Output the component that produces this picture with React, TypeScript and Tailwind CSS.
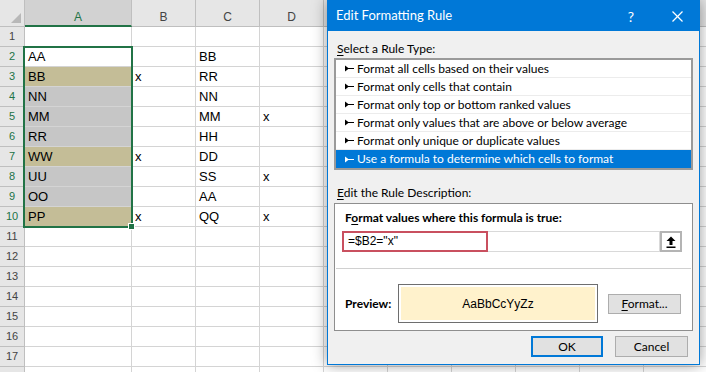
import React from 'react';

const colWidths = [107, 64, 64, 64, 64, 64, 64, 64, 64, 64];
const colNames = ['A', 'B', 'C', 'D', 'E', 'F', 'G', 'H', 'I', 'J'];

const colA: Record<number, string> = { 2: 'AA', 3: 'BB', 4: 'NN', 5: 'MM', 6: 'RR', 7: 'WW', 8: 'UU', 9: 'OO', 10: 'PP' };
const colB: Record<number, string> = { 3: 'x', 7: 'x', 10: 'x' };
const colC: Record<number, string> = { 2: 'BB', 3: 'RR', 4: 'NN', 5: 'MM', 6: 'HH', 7: 'DD', 8: 'SS', 9: 'AA', 10: 'QQ' };
const colD: Record<number, string> = { 5: 'x', 8: 'x', 10: 'x' };
const tanRows = [3, 7, 10];

// row 18 only peeks in at the bottom edge, its number stays hidden
const rows = Array.from({ length: 18 }, (_, i) => i + 1);

const ruleTypes = [
  'Format all cells based on their values',
  'Format only cells that contain',
  'Format only top or bottom ranked values',
  'Format only values that are above or below average',
  'Format only unique or duplicate values',
  'Use a formula to determine which cells to format',
];

function Bullet({ light }: { light?: boolean }) {
  const c = light ? '#ffffff' : '#000000';
  return (
    <svg width="9" height="7" viewBox="0 0 9 7" className="shrink-0">
      <polygon points="0,0.5 4,3.5 0,6.5" fill={c} />
      <line x1="3" y1="3.5" x2="9" y2="3.5" stroke={c} strokeWidth="1" />
    </svg>
  );
}

function cellBg(col: number, row: number) {
  if (col !== 0 || row < 3 || row > 10) return 'bg-white';
  return tanRows.includes(row) ? 'bg-[#c4bd97]' : 'bg-[#c6c6c6]';
}

function cellText(col: number, row: number) {
  if (col === 0) return colA[row];
  if (col === 1) return colB[row];
  if (col === 2) return colC[row];
  if (col === 3) return colD[row];
  return undefined;
}

function Sheet() {
  return (
    <div className="flex flex-col font-['Liberation_Sans',Arial,sans-serif] text-[13px] text-black">
      <div className="flex h-[27px]">
        <div className="relative w-[25px] h-[27px] shrink-0 bg-[#e6e6e6] border-r border-b border-[#bfbfbf]">
          <svg width="10" height="10" viewBox="0 0 10 10" className="absolute right-[3px] bottom-[3px]">
            <polygon points="10,0 10,10 0,10" fill="#b8b8b8" />
          </svg>
        </div>
        {colWidths.map((w, i) => (
          <div
            key={i}
            style={{ width: w }}
            className={
              i === 0
                ? 'shrink-0 h-[27px] bg-[#d2d2d2] border-r border-[#bfbfbf] border-b-2 border-b-[#217346] text-center text-[12px] leading-[18px] pt-[8px] text-[#217346]'
                : 'shrink-0 h-[27px] bg-[#e6e6e6] border-r border-b border-[#bfbfbf] text-center text-[12px] leading-[18px] pt-[8px] text-[#444444]'
            }
          >
            {colNames[i]}
          </div>
        ))}
      </div>
      {rows.map((r) => (
        <div key={r} className="flex h-[20px]">
          <div
            className={
              'w-[25px] h-[20px] shrink-0 bg-[#e6e6e6] border-r border-b border-[#bfbfbf] text-center text-[11px] leading-[19px] ' +
              (r >= 2 && r <= 10 ? 'text-[#217346]' : 'text-[#444444]')
            }
          >
            {r < 18 ? r : null}
          </div>
          {colWidths.map((w, c) => (
            <div
              key={c}
              style={{ width: w }}
              className={'shrink-0 h-[20px] border-r border-b border-[#d4d4d4] pl-[3px] leading-[20px] ' + cellBg(c, r)}
            >
              {cellText(c, r)}
            </div>
          ))}
        </div>
      ))}
    </div>
  );
}

function Dialog() {
  return (
    <div className="absolute left-[327px] top-0 w-[373px] h-[365px] bg-[#f0f0f0] border border-[#0078d7] shadow-[0_0_14px_rgba(0,0,0,0.4)] font-['Lato','Noto_Sans',sans-serif] text-[12px] text-black flex flex-col">
      <div className="h-[30px] shrink-0 bg-[#0078d7] flex items-center text-white">
        <span className="pl-[8px] text-[13px]">Edit Formatting Rule</span>
        <div className="flex-1" />
        <span className="w-[16px] text-center text-[14px] mr-[33px]">?</span>
        <svg width="11" height="11" viewBox="0 0 11 11" className="mr-[16px]">
          <line x1="0.5" y1="0.5" x2="10.5" y2="10.5" stroke="#fff" strokeWidth="1.2" />
          <line x1="10.5" y1="0.5" x2="0.5" y2="10.5" stroke="#fff" strokeWidth="1.2" />
        </svg>
      </div>

      <div className="pl-[9px] pt-[9px] h-[27px] leading-[18px]">
        <span className="underline underline-offset-2">S</span>elect a Rule Type:
      </div>
      <div className="mx-[6px] h-[112px] bg-white border-2 border-[#9a9a9a] flex flex-col">
        {ruleTypes.map((t, i) => {
          const sel = i === ruleTypes.length - 1;
          return (
            <div
              key={t}
              className={
                'h-[18px] flex items-center gap-[3px] pl-[9px] ' +
                (sel ? 'bg-[#0078d7] text-white' : 'border-b border-[#ececec]')
              }
            >
              <Bullet light={sel} />
              <span>{t}</span>
            </div>
          );
        })}
      </div>

      <div className="pl-[9px] mt-[14px] h-[18px] leading-[18px]">
        <span className="underline underline-offset-2">E</span>dit the Rule Description:
      </div>
      <div className="mx-[6px] mt-[1px] h-[128px] bg-white border border-[#8e8e8e] flex flex-col">
        <div className="pl-[10px] pt-[6px] h-[27px] leading-[16px] font-bold">
          F<span className="underline underline-offset-2">o</span>rmat values where this formula is true:
        </div>
        <div className="relative ml-[7px] w-[340px] h-[21px] flex">
          <div className="flex-1 border border-[#d9d9d9] pl-[5px] leading-[19px] font-['Liberation_Sans',Arial,sans-serif]">
            =$B2="x"
          </div>
          <div className="w-[22px] h-[21px] border-2 border-[#b4b4b4] bg-white flex items-center justify-center">
            <svg width="10" height="12" viewBox="0 0 10 12">
              <polygon points="5,0.5 9.5,5 6.5,5 6.5,9 3.5,9 3.5,5 0.5,5" fill="#000" />
              <rect x="0.5" y="10.5" width="9" height="1.5" fill="#000" />
            </svg>
          </div>
          <div className="absolute left-0 top-0 w-[146px] h-[21px] border-2 border-[#c9505f]" />
        </div>
        <div className="mx-[1px] mt-[16px] h-px bg-[#d0d0d0]" />
        <div className="flex items-center mt-[15px]">
          <div className="w-[63px] pl-[10px] font-bold">Preview:</div>
          <div className="w-[200px] h-[39px] border border-[#6e6e6e] p-[2px]">
            <div className="h-full bg-[#fff2cc] flex items-center justify-center font-['Liberation_Sans',Arial,sans-serif] text-[12px]">
              AaBbCcYyZz
            </div>
          </div>
          <div className="ml-[10px] w-[73px] h-[20px] bg-[#e1e1e1] border border-[#adadad] flex items-center justify-center">
            <span>
              <span className="underline underline-offset-2">F</span>ormat...
            </span>
          </div>
        </div>
      </div>

      <div className="flex justify-end gap-[12px] pr-[11px] mt-[5px]">
        <div className="w-[72px] h-[21px] bg-[#e1e1e1] border-2 border-[#0078d7] flex items-center justify-center">OK</div>
        <div className="w-[73px] h-[21px] bg-[#e1e1e1] border border-[#adadad] flex items-center justify-center">Cancel</div>
      </div>
    </div>
  );
}

export default function App() {
  return (
    <div className="relative w-[706px] h-[372px] overflow-hidden bg-white">
      <Sheet />
      {/* selection border A2:A10 */}
      <div className="absolute left-[23px] top-[46px] w-[110px] h-[182px] border-2 border-[#217346] pointer-events-none" />
      <div className="absolute left-[128px] top-[223px] w-[7px] h-[7px] bg-[#217346] border border-white" />
      <Dialog />
    </div>
  );
}
